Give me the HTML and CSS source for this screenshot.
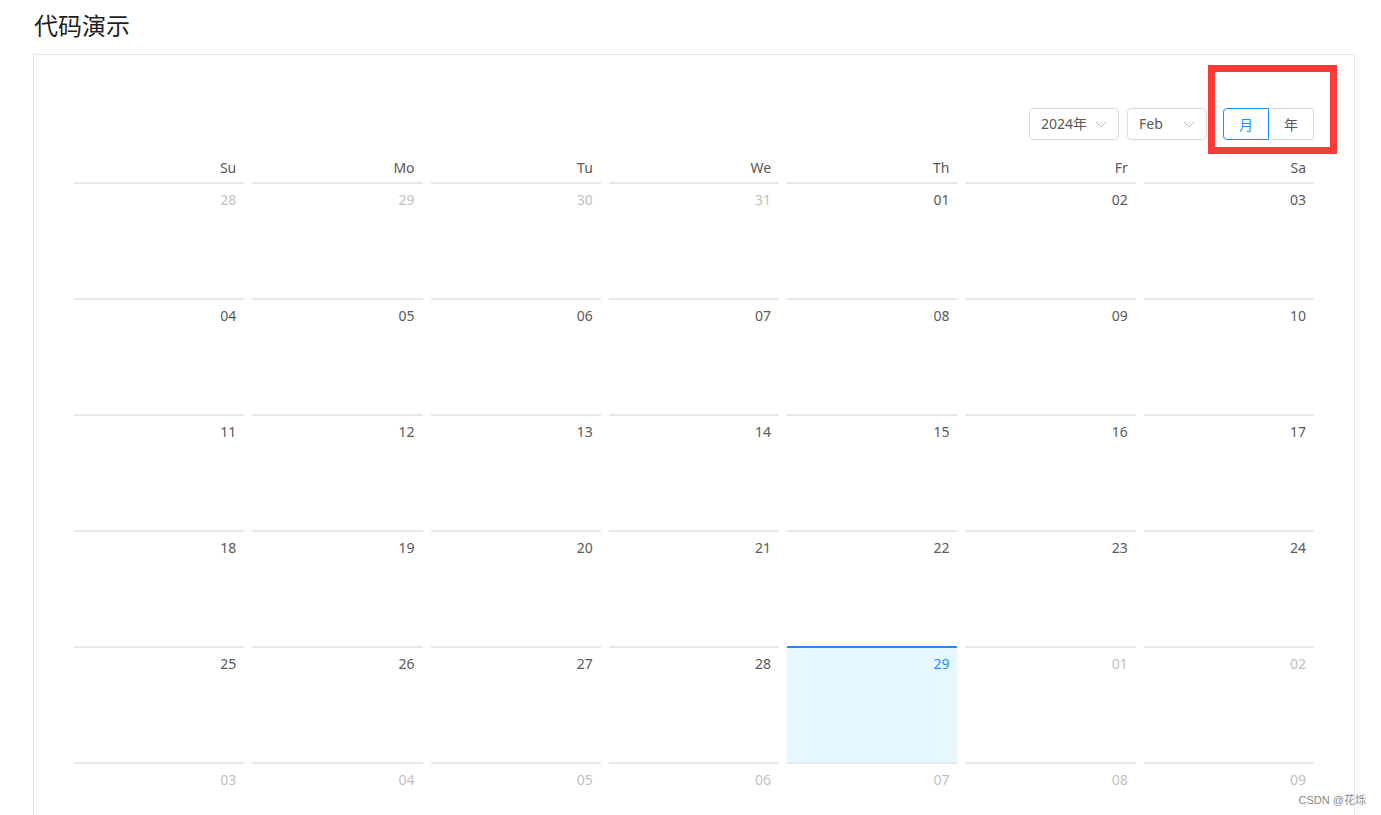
FILE: index.html
```html
<!DOCTYPE html>
<html lang="zh">
<head>
    <meta charset="UTF-8">
    <meta name="viewport" content="width=device-width, initial-scale=1.0">
    <title>代码演示</title>
    <link rel="stylesheet" href="styles.css">
</head>
<body>
    <div class="page">
        <h1 class="title">代码演示</h1>

        <div class="card">
            <div class="calendar-header">
                <div class="select select-year">
                    <span>2024年</span>
                    <svg class="arrow" viewBox="0 0 12 12" width="12" height="12"><path d="M1 4l5 5 5-5" fill="none" stroke="#bfbfbf" stroke-width="1"/></svg>
                </div>
                <div class="select select-month">
                    <span>Feb</span>
                    <svg class="arrow" viewBox="0 0 12 12" width="12" height="12"><path d="M1 4l5 5 5-5" fill="none" stroke="#bfbfbf" stroke-width="1"/></svg>
                </div>
                <div class="radio-group">
                    <span class="radio-btn checked">月</span>
                    <span class="radio-btn">年</span>
                </div>
            </div>

            <div class="calendar-grid" id="grid">
                <div class="col-header">Su</div>
                <div class="col-header">Mo</div>
                <div class="col-header">Tu</div>
                <div class="col-header">We</div>
                <div class="col-header">Th</div>
                <div class="col-header">Fr</div>
                <div class="col-header">Sa</div>
            </div>
        </div>
    </div>

    <div class="mark-box"></div>
    <div class="watermark">CSDN @花烁</div>

    <script>
        // февраль 2024: начинается с четверга, 29 дней
        const grid = document.getElementById('grid');
        const days = [];
        [28, 29, 30, 31].forEach(d => days.push({ d, other: true }));
        for (let d = 1; d <= 29; d++) days.push({ d, other: false, today: d === 29 });
        for (let d = 1; days.length < 42; d++) days.push({ d, other: true });

        days.forEach(day => {
            const cell = document.createElement('div');
            cell.className = 'date';
            if (day.other) cell.classList.add('other-month');
            if (day.today) cell.classList.add('today');
            const value = document.createElement('div');
            value.className = 'date-value';
            value.textContent = String(day.d).padStart(2, '0');
            cell.appendChild(value);
            grid.appendChild(cell);
        });
    </script>
</body>
</html>
```

FILE: styles.css
```css
html, body {
    margin: 0;
    height: 100%;
    overflow: hidden;
}
body {
    position: relative;
    font-family: "Noto Sans", "Noto Sans CJK SC", sans-serif;
    font-size: 14px;
    color: #595959;
    background-color: white;
}
.page {
    padding: 0 26px 0 33px;
}
.title {
    margin: 0 0 13px 1px;
    padding-top: 9px;
    font-size: 24px;
    font-weight: normal;
    line-height: 32px;
    color: #1f1f1f;
    font-family: "Noto Sans CJK SC", sans-serif;
}
.card {
    border: 1px solid #e8e8e8;
    border-radius: 2px;
    padding: 0 36px;
    height: 1000px;
}
.calendar-header {
    display: flex;
    justify-content: flex-end;
    align-items: center;
    gap: 8px;
    padding: 53px 4px 19px 0;
}
.select {
    box-sizing: border-box;
    height: 32px;
    padding: 0 11px;
    border: 1px solid #d9d9d9;
    border-radius: 4px;
    display: flex;
    align-items: center;
    justify-content: space-between;
    line-height: 30px;
    color: #595959;
}
.select-year {
    width: 90px;
}
.select-month {
    width: 80px;
}
.arrow {
    display: block;
}
.radio-group {
    display: flex;
    margin-left: 8px;
}
.radio-btn {
    box-sizing: border-box;
    height: 32px;
    line-height: 30px;
    padding: 0 15px;
    border: 1px solid #d9d9d9;
    border-left: none;
    border-radius: 0 4px 4px 0;
    color: #595959;
    font-family: "Noto Sans CJK SC", sans-serif;
}
.radio-btn.checked {
    border: 1px solid #1890ff;
    border-radius: 4px 0 0 4px;
    color: #1890ff;
}
.calendar-grid {
    display: grid;
    grid-template-columns: repeat(7, 1fr);
}
.col-header {
    text-align: right;
    padding-right: 12px;
    padding-bottom: 5px;
    line-height: 18px;
}
.date {
    box-sizing: border-box;
    height: 116px;
    margin: 0 4px;
    padding: 4px 8px 0;
    border-top: 2px solid #e8e8e8;
}
.date-value {
    text-align: right;
    line-height: 24px;
    color: #595959;
}
.other-month .date-value {
    color: #bfbfbf;
}
.today {
    background-color: #e6f7ff;
    border-top-color: #1890ff;
}
.today .date-value {
    color: #1890ff;
}
.mark-box {
    position: absolute;
    left: 1208px;
    top: 65px;
    width: 129px;
    height: 89px;
    box-sizing: border-box;
    border: 7px solid #fc3a3a;
}
.watermark {
    position: absolute;
    right: 15px;
    top: 792px;
    font-family: "Liberation Sans", "Noto Sans CJK SC", sans-serif;
    font-size: 11px;
    line-height: 16px;
    color: #888;
}
```
